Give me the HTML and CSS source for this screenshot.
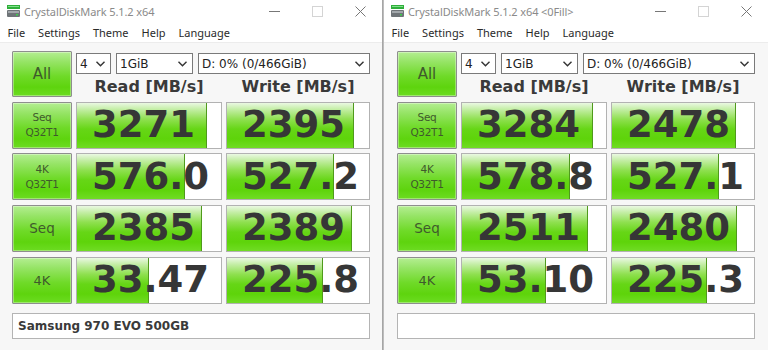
FILE: index.html
```html
<!DOCTYPE html>
<html>
<head>
<meta charset="utf-8">
<link rel="stylesheet" href="styles.css">
</head>
<body>
<div class="desktop">
  <div class="win win-left">
    <div class="titlebar">
      <svg class="appicon" width="13" height="12" viewBox="0 0 13 12"><rect x="0" y="0" width="13" height="4" fill="#2fae3a"/><rect x="1" y="1" width="11" height="1" fill="#7fe08a"/><rect x="0" y="5" width="13" height="7" rx="1" fill="#6f7478"/><rect x="1" y="6" width="11" height="2" fill="#a2a7ab"/><rect x="9" y="9" width="2" height="1.5" fill="#3ad14a"/></svg>
      <span class="title">CrystalDiskMark 5.1.2 x64</span>
      <div class="controls">
        <span class="ctl"><svg width="11" height="11" viewBox="0 0 11 11"><line x1="0" y1="5.5" x2="11" y2="5.5" stroke="#777" stroke-width="1"/></svg></span>
        <span class="ctl"><svg width="11" height="11" viewBox="0 0 11 11"><rect x="0.5" y="0.5" width="10" height="10" fill="none" stroke="#d4d4d4" stroke-width="1"/></svg></span>
        <span class="ctl"><svg width="11" height="11" viewBox="0 0 11 11"><path d="M0.5 0.5 L10.5 10.5 M10.5 0.5 L0.5 10.5" stroke="#777" stroke-width="1"/></svg></span>
      </div>
    </div>
    <div class="menubar"><span>File</span><span>Settings</span><span>Theme</span><span>Help</span><span>Language</span></div>
    <div class="content">
      <div class="grid">
        <div class="btn btn-all">All</div>
        <div class="top">
          <div class="selects">
            <div class="sel sel-n"><span>4</span><svg width="9" height="6" viewBox="0 0 9 6"><polyline points="0.5,0.8 4.5,4.8 8.5,0.8" fill="none" stroke="#333" stroke-width="1.4"/></svg></div>
            <div class="sel sel-size"><span>1GiB</span><svg width="9" height="6" viewBox="0 0 9 6"><polyline points="0.5,0.8 4.5,4.8 8.5,0.8" fill="none" stroke="#333" stroke-width="1.4"/></svg></div>
            <div class="sel sel-drive"><span>D: 0% (0/466GiB)</span><svg width="9" height="6" viewBox="0 0 9 6"><polyline points="0.5,0.8 4.5,4.8 8.5,0.8" fill="none" stroke="#333" stroke-width="1.4"/></svg></div>
          </div>
          <div class="heads"><div class="head">Read [MB/s]</div><div class="head">Write [MB/s]</div></div>
        </div>

        <div class="btn btn-two">Seq<br>Q32T1</div>
        <div class="cell"><div class="bar" style="width:130px"></div><span class="num">3271</span></div>
        <div class="cell"><div class="bar" style="width:127px"></div><span class="num">2395</span></div>

        <div class="btn btn-two">4K<br>Q32T1</div>
        <div class="cell"><div class="bar" style="width:108px"></div><span class="num">576.0</span></div>
        <div class="cell"><div class="bar" style="width:107px"></div><span class="num">527.2</span></div>

        <div class="btn btn-seq">Seq</div>
        <div class="cell"><div class="bar" style="width:125px"></div><span class="num">2385</span></div>
        <div class="cell"><div class="bar" style="width:125px"></div><span class="num">2389</span></div>

        <div class="btn btn-4k">4K</div>
        <div class="cell"><div class="bar" style="width:72px"></div><span class="num">33.47</span></div>
        <div class="cell"><div class="bar" style="width:96px"></div><span class="num">225.8</span></div>
      </div>
      <div class="comment">Samsung 970 EVO 500GB</div>
    </div>
  </div>
  <div class="divider"></div>
  <div class="win win-right">
    <div class="titlebar">
      <svg class="appicon" width="13" height="12" viewBox="0 0 13 12"><rect x="0" y="0" width="13" height="4" fill="#2fae3a"/><rect x="1" y="1" width="11" height="1" fill="#7fe08a"/><rect x="0" y="5" width="13" height="7" rx="1" fill="#6f7478"/><rect x="1" y="6" width="11" height="2" fill="#a2a7ab"/><rect x="9" y="9" width="2" height="1.5" fill="#3ad14a"/></svg>
      <span class="title">CrystalDiskMark 5.1.2 x64 &lt;0Fill&gt;</span>
      <div class="controls">
        <span class="ctl"><svg width="11" height="11" viewBox="0 0 11 11"><line x1="0" y1="5.5" x2="11" y2="5.5" stroke="#777" stroke-width="1"/></svg></span>
        <span class="ctl"><svg width="11" height="11" viewBox="0 0 11 11"><rect x="0.5" y="0.5" width="10" height="10" fill="none" stroke="#d4d4d4" stroke-width="1"/></svg></span>
        <span class="ctl"><svg width="11" height="11" viewBox="0 0 11 11"><path d="M0.5 0.5 L10.5 10.5 M10.5 0.5 L0.5 10.5" stroke="#777" stroke-width="1"/></svg></span>
      </div>
    </div>
    <div class="menubar"><span>File</span><span>Settings</span><span>Theme</span><span>Help</span><span>Language</span></div>
    <div class="content">
      <div class="grid">
        <div class="btn btn-all">All</div>
        <div class="top">
          <div class="selects">
            <div class="sel sel-n"><span>4</span><svg width="9" height="6" viewBox="0 0 9 6"><polyline points="0.5,0.8 4.5,4.8 8.5,0.8" fill="none" stroke="#333" stroke-width="1.4"/></svg></div>
            <div class="sel sel-size"><span>1GiB</span><svg width="9" height="6" viewBox="0 0 9 6"><polyline points="0.5,0.8 4.5,4.8 8.5,0.8" fill="none" stroke="#333" stroke-width="1.4"/></svg></div>
            <div class="sel sel-drive"><span>D: 0% (0/466GiB)</span><svg width="9" height="6" viewBox="0 0 9 6"><polyline points="0.5,0.8 4.5,4.8 8.5,0.8" fill="none" stroke="#333" stroke-width="1.4"/></svg></div>
          </div>
          <div class="heads"><div class="head">Read [MB/s]</div><div class="head">Write [MB/s]</div></div>
        </div>

        <div class="btn btn-two">Seq<br>Q32T1</div>
        <div class="cell"><div class="bar" style="width:131px"></div><span class="num">3284</span></div>
        <div class="cell"><div class="bar" style="width:124px"></div><span class="num">2478</span></div>

        <div class="btn btn-two">4K<br>Q32T1</div>
        <div class="cell"><div class="bar" style="width:108px"></div><span class="num">578.8</span></div>
        <div class="cell"><div class="bar" style="width:107px"></div><span class="num">527.1</span></div>

        <div class="btn btn-seq">Seq</div>
        <div class="cell"><div class="bar" style="width:126px"></div><span class="num">2511</span></div>
        <div class="cell"><div class="bar" style="width:125px"></div><span class="num">2480</span></div>

        <div class="btn btn-4k">4K</div>
        <div class="cell"><div class="bar" style="width:84px"></div><span class="num">53.10</span></div>
        <div class="cell"><div class="bar" style="width:95px"></div><span class="num">225.3</span></div>
      </div>
      <div class="comment"></div>
    </div>
  </div>
</div>
</body>
</html>
```

FILE: styles.css
```css
* { box-sizing: border-box; }
html, body { margin: 0; padding: 0; background: #fff; }
body { width: 768px; height: 350px; overflow: hidden; font-family: "Noto Sans", "DejaVu Sans", sans-serif; }

.desktop { display: flex; height: 350px; }
.win { display: flex; flex-direction: column; background: #fafafa; height: 350px; }
.win-left { width: 382px; }
.win-right { width: 384px; }
.divider { width: 2px; background: linear-gradient(to right, #9a9a9a, #c8c8c8); }

.titlebar { height: 22px; background: #fff; display: flex; align-items: center; padding-left: 7px; }
.appicon { display: block; margin-right: 4px; }
.title { font-size: 11px; color: #8a8a8a; letter-spacing: -0.1px; }
.controls { margin-left: auto; display: flex; }
.ctl { width: 43px; height: 22px; display: flex; align-items: center; justify-content: center; }
.ctl svg { display: block; }

.menubar { height: 21px; background: #fff; display: flex; align-items: center; padding-left: 1px; border-bottom: 1px solid #ececec; font-size: 11px; color: #2a2a2a; }
.menubar span { padding: 0 6.5px; }

.content { padding: 8px 12px 0 12px; background: #f7f7f7; flex: 1; }
.win-right .content { padding-left: 13px; }

.grid { display: grid; grid-template-columns: 60px 146px 144px; grid-template-rows: 46px 47px 47px 47px 47px; column-gap: 4px; row-gap: 4.67px; }
.grid > .btn:nth-child(3) { margin-top: 0.33px; }

.btn {
  border: 1px solid #8e8e8e;
  border-radius: 1px;
  background: linear-gradient(to bottom, #b4ee92 0%, #96e466 22%, #6fda28 55%, #5ed40e 80%, #6cdc22 100%);
  box-shadow: inset 0 0 0 1px rgba(255,255,255,0.35);
  display: flex; align-items: center; justify-content: center; text-align: center;
  font-family: "DejaVu Sans", sans-serif; color: #3f5a2c;
}
.btn-all { font-size: 15px; }
.btn-two { font-size: 10.5px; line-height: 15px; letter-spacing: -0.3px; }
.btn-seq { font-size: 13.5px; }
.btn-4k { font-size: 13px; }

.top { grid-column: 2 / span 2; display: flex; flex-direction: column; }
.selects { display: flex; gap: 5px; margin-top: 2px; height: 21px; }
.sel { height: 21px; background: #fff; border: 1px solid #7a7a7a; display: flex; align-items: center; justify-content: space-between; padding: 0 5px 0 3px; font-family: "DejaVu Sans", sans-serif; font-size: 12px; color: #222; }
.sel svg { display: block; }
.sel-n { width: 35px; }
.sel-size { width: 77px; }
.sel-drive { width: 172px; }
.heads { display: flex; gap: 4px; flex: 1; align-items: center; padding-top: 1px; }
.head { font-family: "DejaVu Sans", sans-serif; font-weight: bold; font-size: 16px; color: #3a3a3a; text-align: center; }
.head:first-child { width: 146px; }
.head:last-child { width: 144px; }

.cell { position: relative; background: #fff; border: 1px solid #b2b2b2; display: flex; align-items: center; padding-left: 15px; overflow: hidden; }
.bar {
  position: absolute; left: 0; top: 0; bottom: 0;
  background: linear-gradient(to bottom, #eaf8e2 0%, #c4eea6 14%, #8fe050 36%, #66d616 58%, #5ed40a 80%, #70dc24 100%);
  border-right: 1px solid #4f9a1c;
}
.num { position: relative; font-family: "DejaVu Sans", sans-serif; font-weight: bold; font-size: 37px; line-height: 40px; color: #363636; letter-spacing: 0; }

.comment { margin-top: 9px; width: 358px; height: 26px; background: #fff; border: 1px solid #b4b4b4; display: flex; align-items: center; padding-left: 5px; font-family: "DejaVu Sans", sans-serif; font-weight: bold; font-size: 12px; color: #3a3a3a; }
```
